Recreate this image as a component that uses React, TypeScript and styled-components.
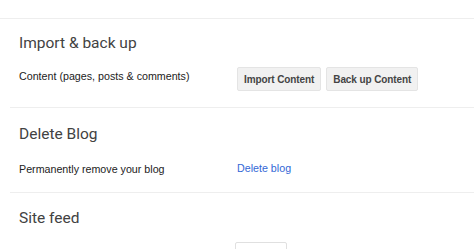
import React from 'react'
import { styled, createGlobalStyle } from 'styled-components'

const GlobalStyle = createGlobalStyle`
  body {
    margin: 0;
    background: #ffffff;
    font-family: "Liberation Sans", Arial, sans-serif;
  }
`

function App() {
  return (
    <Page>
      <GlobalStyle />
      <TopBar />
      <Section>
        <Heading>Import &amp; back up</Heading>
        <Row $top>
          <Label>Content (pages, posts &amp; comments)</Label>
          <Controls>
            <Button>Import Content</Button>
            <Button>Back up Content</Button>
          </Controls>
        </Row>
      </Section>
      <Section $pt={14} $pb={12} $hm={10}>
        <Heading>Delete Blog</Heading>
        <Row>
          <Label>Permanently remove your blog</Label>
          <Controls>
            <LinkText href="#">Delete blog</LinkText>
          </Controls>
        </Row>
      </Section>
      <Section $pt={13}>
        <Heading>Site feed</Heading>
        <Row $offset={2}>
          <Label>Allow Blog Feed</Label>
          <Controls>
            <SelectBox>Full</SelectBox>
          </Controls>
        </Row>
      </Section>
    </Page>
  )
}

const Page = styled.div`
  width: 474px;
  height: 249px;
  overflow: hidden;
`

const TopBar = styled.div`
  height: 18px;
  border-bottom: 1px solid #eeeeee;
`

const Section = styled.section<{ $pt?: number; $pb?: number; $hm?: number }>`
  margin-left: 10px;
  padding: ${({ $pt = 12 }) => $pt}px 0 ${({ $pb = 16 }) => $pb}px 9px;
  border-bottom: 1px solid #eeeeee;

  h2 {
    margin-bottom: ${({ $hm = 12 }) => $hm}px;
  }
`

const Heading = styled.h2`
  margin: 0;
  font-family: Roboto, "Open Sans", sans-serif;
  font-size: 15.5px;
  line-height: 24px;
  font-weight: 400;
  color: #424242;
`

const Row = styled.div<{ $top?: boolean; $offset?: number }>`
  display: flex;
  align-items: ${({ $top }) => ($top ? 'flex-start' : 'center')};
  min-height: 24px;
  margin-top: ${({ $offset = 0 }) => $offset}px;
`

const Label = styled.div`
  width: 218px;
  padding-top: 1px;
  font-size: 10.7px;
  line-height: 16px;
  color: #222222;
`

const Controls = styled.div`
  display: flex;
  align-items: center;
  gap: 5px;
`

const Button = styled.button`
  height: 24px;
  padding: 0 6px;
  background: #f1f1f1;
  border: 1px solid #e4e4e4;
  border-radius: 2px;
  font-family: "Liberation Sans", Arial, sans-serif;
  font-size: 10px;
  letter-spacing: -0.1px;
  font-weight: 700;
  color: #444444;
`

const LinkText = styled.a`
  font-size: 10.7px;
  color: #3367d6;
  text-decoration: none;
`

const SelectBox = styled.div`
  width: 44px;
  height: 22px;
  margin-left: -2px;
  padding-left: 6px;
  border: 1px solid #e0e0e0;
  border-radius: 2px;
  font-size: 11px;
  line-height: 22px;
  color: #222222;
`

export default App
